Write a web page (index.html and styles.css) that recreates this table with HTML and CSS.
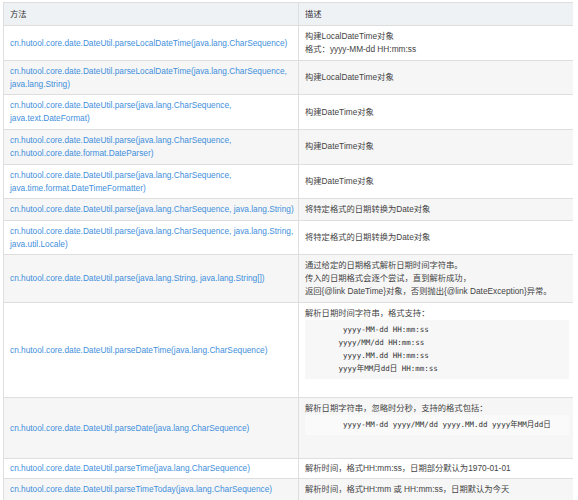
FILE: index.html
```html
<!DOCTYPE html>
<html lang="zh-CN">
<head>
<meta charset="utf-8">
<title>DateUtil</title>
<link rel="stylesheet" href="styles.css">
</head>
<body>
<table class="api">
  <thead>
    <tr><th class="col-method">方法</th><th class="col-desc">描述</th></tr>
  </thead>
  <tbody>
    <tr>
      <td class="method"><a>cn.hutool.core.date.DateUtil.parseLocalDateTime(java.lang.CharSequence)</a></td>
      <td class="desc">构建LocalDateTime对象<br>格式：yyyy-MM-dd HH:mm:ss</td>
    </tr>
    <tr>
      <td class="method"><a>cn.hutool.core.date.DateUtil.parseLocalDateTime(java.lang.CharSequence,<br>java.lang.String)</a></td>
      <td class="desc">构建LocalDateTime对象</td>
    </tr>
    <tr>
      <td class="method"><a>cn.hutool.core.date.DateUtil.parse(java.lang.CharSequence,<br>java.text.DateFormat)</a></td>
      <td class="desc">构建DateTime对象</td>
    </tr>
    <tr>
      <td class="method"><a>cn.hutool.core.date.DateUtil.parse(java.lang.CharSequence,<br>cn.hutool.core.date.format.DateParser)</a></td>
      <td class="desc">构建DateTime对象</td>
    </tr>
    <tr>
      <td class="method"><a>cn.hutool.core.date.DateUtil.parse(java.lang.CharSequence,<br>java.time.format.DateTimeFormatter)</a></td>
      <td class="desc">构建DateTime对象</td>
    </tr>
    <tr>
      <td class="method"><a>cn.hutool.core.date.DateUtil.parse(java.lang.CharSequence, java.lang.String)</a></td>
      <td class="desc">将特定格式的日期转换为Date对象</td>
    </tr>
    <tr>
      <td class="method"><a>cn.hutool.core.date.DateUtil.parse(java.lang.CharSequence, java.lang.String,<br>java.util.Locale)</a></td>
      <td class="desc">将特定格式的日期转换为Date对象</td>
    </tr>
    <tr>
      <td class="method"><a>cn.hutool.core.date.DateUtil.parse(java.lang.String, java.lang.String[])</a></td>
      <td class="desc">通过给定的日期格式解析日期时间字符串。<br>传入的日期格式会逐个尝试，直到解析成功，<br>返回{@link DateTime}对象，否则抛出{@link DateException}异常。</td>
    </tr>
    <tr>
      <td class="method"><a>cn.hutool.core.date.DateUtil.parseDateTime(java.lang.CharSequence)</a></td>
      <td class="desc">解析日期时间字符串，格式支持：<pre class="code code-tall">      yyyy-MM-dd HH:mm:ss
     yyyy/MM/dd HH:mm:ss
      yyyy.MM.dd HH:mm:ss
     yyyy年MM月dd日 HH:mm:ss</pre></td>
    </tr>
    <tr>
      <td class="method"><a>cn.hutool.core.date.DateUtil.parseDate(java.lang.CharSequence)</a></td>
      <td class="desc">解析日期字符串，忽略时分秒，支持的格式包括：<pre class="code code-wide">      yyyy-MM-dd yyyy/MM/dd yyyy.MM.dd yyyy年MM月dd日</pre></td>
    </tr>
    <tr class="short">
      <td class="method"><a>cn.hutool.core.date.DateUtil.parseTime(java.lang.CharSequence)</a></td>
      <td class="desc">解析时间，格式HH:mm:ss，日期部分默认为1970-01-01</td>
    </tr>
    <tr>
      <td class="method"><a>cn.hutool.core.date.DateUtil.parseTimeToday(java.lang.CharSequence)</a></td>
      <td class="desc">解析时间，格式HH:mm 或 HH:mm:ss，日期默认为今天</td>
    </tr>
  </tbody>
</table>
</body>
</html>
```

FILE: styles.css
```css
html, body {
  background: #ffffff;
}
body {
  margin: 2px 5px 0 3px;
  font-family: "Liberation Sans", "Noto Sans CJK SC", sans-serif;
  font-size: 8.3px;
  line-height: 13px;
  color: #444444;
}
.api {
  border-collapse: collapse;
  width: 570px;
  table-layout: fixed;
}
.api th,
.api td {
  border: 1px solid #dedede;
  padding: 4px 6px 3.65px 6px;
  text-align: left;
  vertical-align: middle;
}
.api th {
  background: #eef2f5;
  color: #333333;
  font-weight: normal;
  padding-top: 5px;
  padding-bottom: 4px;
}
.col-method {
  width: 282px;
}
.col-desc {
  width: 264px;
}
.api tbody tr:nth-child(even) td {
  background: #f6f6f6;
}
.method {
  white-space: nowrap;
}
.method a {
  color: #3f8fdc;
  text-decoration: none;
}
.desc {
  color: #444444;
}
.code {
  margin: 0;
  padding: 3px 11px 4px 11px;
  background: #f7f7f8;
  font-family: "DejaVu Sans Mono", "Noto Sans CJK SC", monospace;
  font-size: 7.5px;
  line-height: 13px;
  color: #333333;
  white-space: pre;
}
.api tbody tr:nth-child(even) .code {
  background: #fafafa;
}
.code-tall {
  margin-bottom: 14px;
}
.code-wide {
  margin-bottom: 20px;
}
.short td {
  padding-top: 3px;
  padding-bottom: 3px;
}
```
